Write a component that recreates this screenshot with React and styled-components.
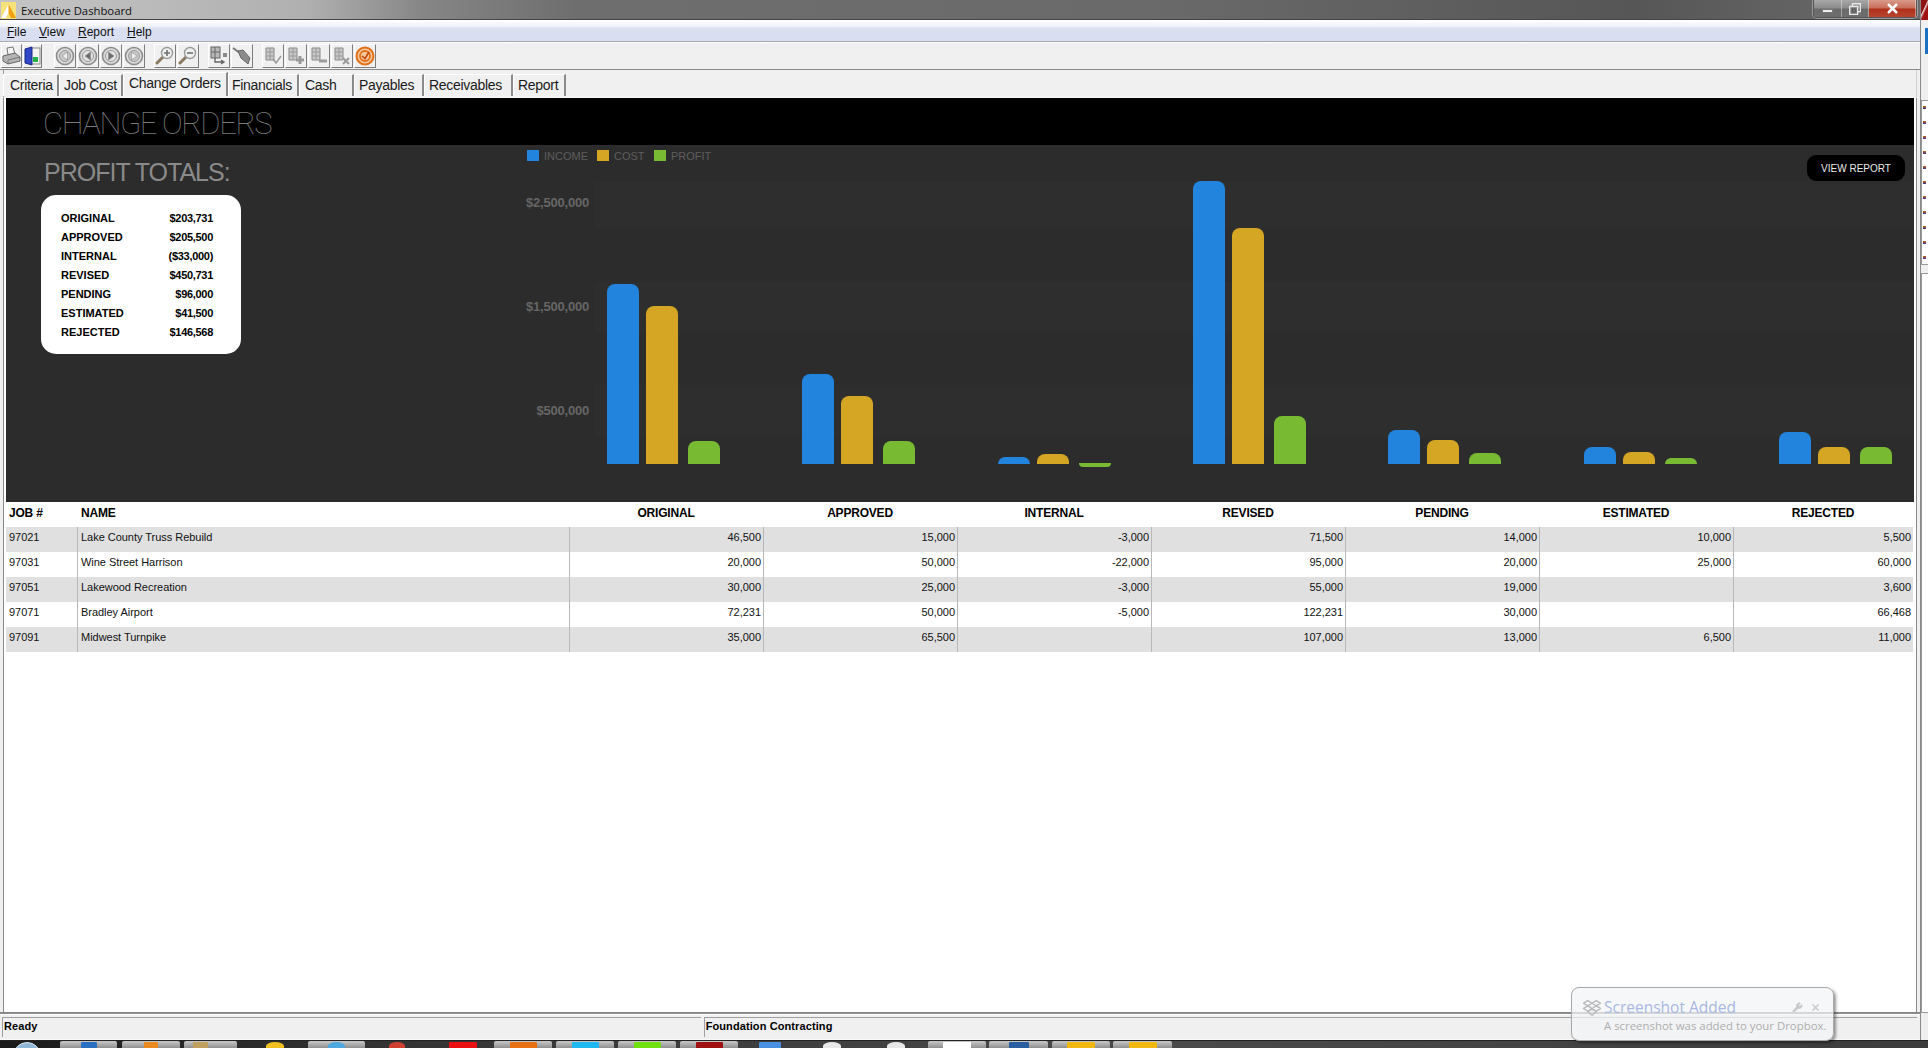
import React from "react";
import styled, { createGlobalStyle } from "styled-components";
import { Wrench, X } from "lucide-react";

const GlobalStyle = createGlobalStyle`
  html, body {
    margin: 0;
    padding: 0;
    width: 1928px;
    height: 1048px;
    overflow: hidden;
    background: #f0f0f0;
    font-family: "Liberation Sans", Arial, sans-serif;
  }
  * { box-sizing: border-box; }
`;

const Page = styled.div`
  position: relative;
  width: 1928px;
  height: 1048px;
  display: flex;
  flex-direction: column;
  overflow: hidden;
`;

const Desktop = styled.div`
  height: 1040px;
  display: flex;
`;

const Window = styled.div`
  width: 1920px;
  display: flex;
  flex-direction: column;
  background: #f0f0f0;
`;

// title bar
const TitleBar = styled.div`
  height: 22px;
  flex: none;
  display: flex;
  justify-content: space-between;
  border-bottom: 2px solid #fff;
  box-shadow: inset 0 -1px 0 #444;
  background: linear-gradient(90deg, #c4c4c4 0, #b0b0b0 16%, #868686 22%, #6e6e6e 30%, #6a6a6a 60%, #565656 85%, #6c6c6c 100%);
`;

const TitleLeft = styled.div`
  display: flex;
  align-items: center;
  padding-left: 1px;
  height: 20px;
`;

const TitleText = styled.span`
  margin-left: 5px;
  font-family: "Open Sans", sans-serif;
  font-size: 11.3px;
  color: #111;
`;

const WindowControls = styled.div`
  display: flex;
  height: 18px;
  margin-right: 3px;
  border: 1px solid #555;
  border-top: none;
  border-radius: 0 0 4px 4px;
  box-shadow: 0 0 0 1px rgba(255, 255, 255, 0.35);
`;

const ControlButton = styled.div`
  width: ${(p) => p.$w}px;
  display: flex;
  align-items: center;
  justify-content: center;
  border-right: 1px solid rgba(255, 255, 255, 0.4);
  background: ${(p) =>
    p.$close
      ? "linear-gradient(#d99a8a 0, #c9705c 45%, #b0301a 55%, #b8452e 100%)"
      : "linear-gradient(#a8a8a8 0, #8c8c8c 45%, #6a6a6a 55%, #6e6e6e 100%)"};
`;

const MinGlyph = styled.span`
  display: block;
  width: 11px;
  height: 4px;
  margin-top: 5px;
  background: #eee;
  border: 1px solid #777;
`;

// menu
const MenuBar = styled.div`
  height: 19px;
  flex: none;
  display: flex;
  align-items: center;
  padding-left: 7px;
  font-size: 12px;
  color: #111;
  background: linear-gradient(#f8f9fc 0, #f2f4fa 20%, #dbe0f1 35%, #d9dff0 100%);
`;

const MenuItem = styled.span`
  width: ${(p) => p.$w}px;
  &::first-letter {
    text-decoration: underline;
  }
`;

const Separator = styled.div`
  height: 2px;
  flex: none;
  background: #a6a8ae;
  border-bottom: 1px solid #fff;
`;

// toolbar
const Toolbar = styled.div`
  height: 27px;
  flex: none;
  display: flex;
  align-items: flex-start;
  padding: 1px 0 0 1px;
  border-bottom: 1px solid #8a8a8a;
`;

const ToolGroup = styled.div`
  display: flex;
  gap: ${(p) => p.$gap ?? 1}px;
  margin-right: ${(p) => p.$after}px;
`;

const ToolButton = styled.div`
  width: ${(p) => p.$w ?? 21}px;
  height: 24px;
  display: flex;
  align-items: center;
  justify-content: center;
  border-right: 1px solid #7d7d7d;
  border-bottom: 1px solid #7d7d7d;
  border-left: 1px solid #fff;
  border-top: 1px solid #fff;
`;

// tabs
const TabRow = styled.div`
  height: 28px;
  flex: none;
  display: flex;
  align-items: flex-end;
  margin: 0 3px;
  padding-bottom: 1px;
  border-left: 1px solid #9a9a9a;
  border-right: 1px solid #cfcfcf;
  border-bottom: 1px solid #fafafa;
`;

const Tab = styled.div`
  width: ${(p) => p.$w}px;
  height: ${(p) => (p.$active ? 24 : 22)}px;
  margin-left: ${(p) => p.$pull ?? 0}px;
  padding: ${(p) => (p.$active ? `0 0 4px ${p.$pad}px` : `0 0 2px ${p.$pad}px`)};
  display: flex;
  align-items: center;
  font-size: 14px;
  letter-spacing: -0.3px;
  color: #1a1a1a;
  border-right: 2px solid #8a8a8a;
  border-left: 1px solid #fff;
  border-top: 1px solid #fff;
  white-space: nowrap;
`;

const TabBody = styled.div`
  flex: 1;
  margin: 0 3px;
  padding: 0 2px;
  display: flex;
  flex-direction: column;
  background: #fff;
  border-left: 1px solid #8a8a8a;
  border-right: 1px solid #8a8a8a;
`;

const PageHeader = styled.div`
  height: 47px;
  flex: none;
  padding: 3px 0 0 37px;
  display: flex;
  align-items: center;
  background: #000;
`;

const PageTitle = styled.h1`
  margin: 0;
  font-family: Roboto, sans-serif;
  font-size: 31px;
  font-weight: 100;
  letter-spacing: -1.4px;
  color: #7a7a7a;
`;

// chart panel
const ChartPanel = styled.div`
  position: relative;
  height: 357px;
  flex: none;
  display: flex;
  background: #2c2c2c;
`;

const TotalsColumn = styled.div`
  width: 521px;
  flex: none;
  padding: 12px 0 0 35px;
`;

const TotalsTitle = styled.div`
  height: 30px;
  margin: 0 0 8px 3px;
  font-size: 25px;
  line-height: 30px;
  letter-spacing: -1px;
  color: #8a8a8a;
  white-space: nowrap;
`;

const TotalsCard = styled.div`
  width: 200px;
  height: 159px;
  padding: 13px 28px 0 20px;
  border-radius: 15px;
  background: #fff;
`;

const TotalsRow = styled.div`
  height: 19px;
  display: flex;
  justify-content: space-between;
  align-items: center;
  font-size: 11px;
  font-weight: bold;
  color: #000;
`;

const TotalValue = styled.span`
  letter-spacing: -0.3px;
`;

const PlotColumn = styled.div`
  flex: 1;
  padding-top: 5px;
`;

const Legend = styled.div`
  height: 11px;
  display: flex;
  align-items: center;
`;

const Swatch = styled.span`
  width: 12px;
  height: 11px;
  margin-right: 5px;
  background: ${(p) => p.$color};
`;

const LegendLabel = styled.span`
  width: ${(p) => p.$w}px;
  font-size: 11px;
  color: #5e5e5e;
`;

const Plot = styled.div`
  margin: 9px 0 0 -2px;
  display: flex;
`;

const Axis = styled.div`
  width: 64px;
  flex: none;
  padding-top: 25px;
  display: flex;
  flex-direction: column;
  gap: 88px;
  text-align: right;
`;

const AxisLabel = styled.div`
  height: 16px;
  font-size: 13px;
  line-height: 16px;
  font-weight: bold;
  color: #666;
  letter-spacing: -0.2px;
  white-space: nowrap;
`;

const Bars = styled.div`
  flex: 1;
  height: 294px;
  margin-left: 6px;
  padding-left: 12px;
  display: flex;
  align-items: flex-end;
  gap: 82.33px;
  background: linear-gradient(
    #2c2c2c 12px,
    #2e2e2e 12px,
    #2e2e2e 59px,
    #2c2c2c 59px,
    #2c2c2c 112px,
    #2e2e2e 112px,
    #2e2e2e 163px,
    #2c2c2c 163px,
    #2c2c2c 215px,
    #2e2e2e 215px,
    #2e2e2e 267px,
    #2c2c2c 267px
  );
`;

const BarGroup = styled.div`
  width: 113px;
  flex: none;
  display: flex;
  align-items: flex-end;
  gap: 7px;
`;

const Bar = styled.div`
  width: 32px;
  flex: none;
  height: ${(p) => Math.abs(p.$h)}px;
  margin-left: ${(p) => p.$left ?? 0}px;
  margin-bottom: ${(p) => (p.$h < 0 ? -3 : 0)}px;
  border-radius: ${(p) => (p.$h < 0 ? "0 0 8px 8px" : "8px 8px 0 0")};
  background: ${(p) => p.$color};
`;

const ViewReport = styled.div`
  position: absolute;
  top: 10px;
  right: 9px;
  width: 98px;
  height: 26px;
  display: flex;
  align-items: center;
  justify-content: center;
  border-radius: 9px;
  background: #000;
  font-size: 10px;
  color: #eaeaea;
`;

// table
const TableRow = styled.div`
  height: 25px;
  width: 1907px;
  flex: none;
  display: grid;
  grid-template-columns: 71px 492px repeat(6, 194px) 180px;
  background: ${(p) => (p.$shade ? "#e0e0e0" : "#fff")};
`;

const HeadCell = styled.div`
  display: flex;
  align-items: center;
  justify-content: ${(p) => (p.$left ? "flex-start" : "center")};
  padding: 0 0 3px ${(p) => (p.$left ? 3 : 0)}px;
  margin-left: ${(p) => (p.$indent ? 1 : 0)}px;
  font-size: 12px;
  font-weight: bold;
  letter-spacing: -0.2px;
  color: #000;
`;

const Cell = styled.div`
  display: flex;
  align-items: center;
  justify-content: ${(p) => (p.$num ? "flex-end" : "flex-start")};
  padding: 0 ${(p) => (p.$num ? 2 : 0)}px 5px ${(p) => (p.$num ? 0 : 3)}px;
  border-left: ${(p) => (p.$first ? "none" : "1px solid #b8b8b8")};
  font-size: 11px;
  letter-spacing: -0.03px;
  color: #111;
`;

// status bar
const StatusBar = styled.div`
  height: 28px;
  flex: none;
  display: flex;
  padding: 3px 0 2px 2px;
  border-top: 2px solid #8a8a8a;
  box-shadow: inset 0 1px 0 #fff;
  border-bottom: 1px solid #fafafa;
  font-size: 11px;
  font-weight: bold;
  letter-spacing: 0.1px;
  color: #000;
`;

const StatusPane = styled.div`
  width: ${(p) => p.$w}px;
  margin-right: 3px;
  padding: 0 0 3px 1px;
  display: flex;
  align-items: center;
  border-top: 1px solid #a0a0a0;
  border-left: 1px solid #a0a0a0;
`;

// edge of the window behind
const BehindEdge = styled.div`
  width: 8px;
  display: flex;
  flex-direction: column;
  align-items: flex-end;
  background: #efefef;
  border-left: 1px solid #8a8a8a;
`;

const RedCap = styled.div`
  width: 7px;
  height: 20px;
  background: linear-gradient(115deg, #8f1212 40%, #e8d8d8 45%, #a01010 60%);
`;

const BlueStrip = styled.div`
  width: 3px;
  height: 26px;
  margin-top: 8px;
  background: #1a6fc0;
`;

const DotList = styled.div`
  width: 7px;
  height: 165px;
  margin-top: 46px;
  border: 1px solid #999;
  border-right: none;
  background-color: #fff;
  background-image: repeating-linear-gradient(
    #fff 0,
    #fff 5px,
    #c86a10 5px,
    #3a2a90 8px,
    #fff 8px,
    #fff 15px
  );
  background-size: 3px 100%;
  background-position: 1px 0;
  background-repeat: no-repeat;
`;

const LowerBox = styled.div`
  width: 7px;
  height: 740px;
  margin-top: 8px;
  border: 1px solid #999;
  border-right: none;
  background: #fff;
`;

// taskbar
const Taskbar = styled.div`
  height: 8px;
  flex: none;
  display: flex;
  padding-left: 60px;
  position: relative;
  background: linear-gradient(90deg, #1a1a1a 0, #333 20%, #4a4a4a 60%, #3c3c3c 100%);
  border-top: 1px solid #222;
`;

const StartOrb = styled.div`
  position: absolute;
  left: 13px;
  top: 1px;
  width: 28px;
  height: 28px;
  border-radius: 50%;
  background: #8fb8d8;
  border: 1px solid #dfe8f0;
`;

const TaskButton = styled.div`
  width: ${(p) => p.$w}px;
  margin-right: ${(p) => p.$gap ?? 3}px;
  flex: none;
  display: flex;
  justify-content: center;
  padding-top: 1px;
  border-radius: 2px 2px 0 0;
  background: ${(p) => (p.$lit ? "linear-gradient(#c8c8c8, #8f8f8f)" : "transparent")};
`;

const TaskIcon = styled.span`
  display: block;
  width: ${(p) => p.$w}px;
  height: 8px;
  margin-left: ${(p) => p.$shift ?? 0}px;
  background: ${(p) => p.$color};
  border-radius: ${(p) => (p.$round ? "50% 50% 0 0" : "1px 1px 0 0")};
`;

// dropbox toast, floats over the window
const Toast = styled.div`
  position: absolute;
  left: 1571px;
  top: 987px;
  width: 263px;
  height: 54px;
  padding: 10px 0 0 11px;
  display: flex;
  gap: 3px;
  border: 1px solid #a8a8a8;
  border-radius: 8px;
  background: rgba(242, 244, 246, 0.72);
  box-shadow: 2px 2px 3px rgba(0, 0, 0, 0.4);
`;

const ToastMark = styled.div`
  flex: none;
  width: 18px;
  padding-top: 1px;
`;

const ToastBody = styled.div`
  flex: 1;
  min-width: 0;
  font-family: "Open Sans", sans-serif;
`;

const ToastHead = styled.div`
  display: flex;
  align-items: center;
  justify-content: space-between;
  padding-right: 12px;
`;

const ToastTitle = styled.div`
  font-size: 15.5px;
  line-height: 18px;
  color: #a9b8e0;
`;

const ToastActions = styled.div`
  display: flex;
  gap: 7px;
  color: #c8c8c8;
`;

const ToastText = styled.div`
  margin-top: 2px;
  font-size: 11.4px;
  line-height: 16px;
  color: #aeaeae;
  white-space: nowrap;
`;

const AppLogo = () => (
  <svg width="15" height="17" viewBox="0 0 15 17">
    <rect width="15" height="17" fill="#f6e27a" />
    <path d="M0 16 L7.5 2 L15 16 L10 16 L7.5 11 L5 16 Z" fill="#f0a010" />
    <path d="M0 16 L7.5 2 L7.5 11 L5 16 Z" fill="#fff" />
  </svg>
);

const RestoreGlyph = () => (
  <svg width="12" height="12" viewBox="0 0 12 12" fill="none" stroke="#e8e8e8" strokeWidth="1.4">
    <rect x="3.5" y="0.7" width="8" height="8" />
    <rect x="0.7" y="3.5" width="8" height="8" fill="#7c7c7c" />
    <rect x="3.2" y="6" width="3" height="3" stroke="#555" strokeWidth="1" />
  </svg>
);

const PrinterIcon = () => (
  <svg width="19" height="20" viewBox="0 0 19 20">
    <path d="M5 2 L11 1 L13 8 L6 9 Z" fill="#f4f4f4" stroke="#777" />
    <path d="M1 10 L13 7 L18 11 L18 15 L6 18 L1 15 Z" fill="#b4b4b4" stroke="#666" />
    <path d="M6 18 L6 14 L18 11" fill="none" stroke="#777" />
  </svg>
);

const DoorIcon = () => (
  <svg width="17" height="20" viewBox="0 0 17 20">
    <rect x="7" y="2" width="9" height="16" fill="#f4f4f4" stroke="#888" />
    <rect x="9" y="11" width="5" height="5" fill="#22b04a" />
    <path d="M1 3 L8 1 L8 19 L1 17 Z" fill="#3048c8" stroke="#1a2a80" />
  </svg>
);

// dir -1 points left, first/last ones are paler
const NavIcon = ({ dir, bar }) => (
  <svg width="20" height="20" viewBox="0 0 20 20">
    <circle cx="10" cy="10" r="8.5" fill="#dcdcdc" stroke="#8c8c8c" strokeWidth="1.6" />
    <circle cx="10" cy="10" r="5.5" fill={bar ? "#c8c8c8" : "#e4e4e4"} stroke="#999" />
    <path
      d={dir < 0 ? "M12.5 6 L7 10 L12.5 14 Z" : "M7.5 6 L13 10 L7.5 14 Z"}
      fill={bar ? "#efefef" : "#6e6e6e"}
      stroke="#888"
      strokeWidth="0.6"
    />
  </svg>
);

const ZoomIcon = ({ plus }) => (
  <svg width="20" height="20" viewBox="0 0 20 20">
    <path d="M8 11 L2 17" stroke="#8a7a60" strokeWidth="3" strokeLinecap="round" />
    <circle cx="12" cy="7" r="5.5" fill="#eef0f0" stroke="#9a9a9a" strokeWidth="1.4" />
    <path d={plus ? "M9 7 H15 M12 4 V10" : "M9 7 H15"} stroke="#707070" strokeWidth="1.6" />
  </svg>
);

const TreeIcon = () => (
  <svg width="20" height="20" viewBox="0 0 20 20">
    <rect x="2" y="1" width="9" height="11" fill="#b8b8b8" stroke="#666" />
    <path d="M2 6 H11 M6 1 V12" stroke="#666" />
    <rect x="14" y="7" width="4" height="4" fill="#888" />
    <path d="M6 12 V16 H14 M12 14 L15 16 L12 18" fill="none" stroke="#666" strokeWidth="1.4" />
  </svg>
);

const BroomIcon = () => (
  <svg width="20" height="20" viewBox="0 0 20 20">
    <path d="M1 2 L8 7" stroke="#777" strokeWidth="2" />
    <path d="M6 5 L11 4 L18 12 L16 18 L9 12 Z" fill="#8c8c8c" stroke="#666" />
  </svg>
);

const DbIcon = ({ mark }) => (
  <svg width="20" height="20" viewBox="0 0 20 20">
    <path d="M3 2 H11 V14 H3 Z" fill="#c8c8c8" stroke="#8a8a8a" />
    <path d="M3 6 H11 M3 10 H11 M7 2 V14" stroke="#9a9a9a" />
    {mark === "check" && <path d="M10 13 L13 17 L18 10" fill="none" stroke="#9a9a9a" strokeWidth="1.6" />}
    {mark === "plus" && <path d="M14 10 V18 M10 14 H18" stroke="#9a9a9a" strokeWidth="3" />}
    {mark === "minus" && <path d="M10 15 H18" stroke="#9a9a9a" strokeWidth="3" />}
    {mark === "x" && <path d="M11 12 L17 18 M17 12 L11 18" stroke="#9a9a9a" strokeWidth="2" />}
  </svg>
);

const TargetIcon = () => (
  <svg width="20" height="20" viewBox="0 0 20 20" fill="none">
    <circle cx="10" cy="10" r="8.5" fill="#f6c79a" stroke="#e0701a" strokeWidth="2" />
    <circle cx="10" cy="10" r="5" stroke="#e0701a" strokeWidth="1.8" />
    <path d="M7 10 L10 12.5 L14 6" stroke="#c04a08" strokeWidth="1.6" />
  </svg>
);

const DropboxMark = () => (
  <svg width="18" height="18" viewBox="0 0 17 17" fill="none" stroke="#b8b8b8" strokeWidth="1.2">
    <path d="M4.5 1.5 L8.5 4 L4.5 6.5 L0.5 4 Z" />
    <path d="M12.5 1.5 L16.5 4 L12.5 6.5 L8.5 4 Z" />
    <path d="M4.5 6.5 L8.5 9 L4.5 11.5 L0.5 9 Z" />
    <path d="M12.5 6.5 L16.5 9 L12.5 11.5 L8.5 9 Z" />
    <path d="M4.5 12 L8.5 9.7 L12.5 12 L8.5 15.5 Z" />
  </svg>
);

const menus = [
  { label: "File", w: 32 },
  { label: "View", w: 39 },
  { label: "Report", w: 49 },
  { label: "Help", w: 30 },
];

const tabs = [
  { label: "Criteria", w: 56, pad: 6, pull: -1 },
  { label: "Job Cost", w: 64, pad: 4 },
  { label: "Change Orders", w: 105, pad: 5, active: true },
  { label: "Financials", w: 71, pad: 3 },
  { label: "Cash", w: 55, pad: 5 },
  { label: "Payables", w: 70, pad: 4 },
  { label: "Receivables", w: 89, pad: 4 },
  { label: "Report", w: 53, pad: 4 },
];

const totals = [
  ["ORIGINAL", "$203,731"],
  ["APPROVED", "$205,500"],
  ["INTERNAL", "($33,000)"],
  ["REVISED", "$450,731"],
  ["PENDING", "$96,000"],
  ["ESTIMATED", "$41,500"],
  ["REJECTED", "$146,568"],
];

const BLUE = "#2284dc";
const GOLD = "#d4a624";
const GREEN = "#78bb33";

// income, cost, profit heights in px, taken from the totals
const barSets = [
  [180, 158, 23],
  [90, 68, 23],
  [7, 10, -4],
  [283, 236, 48],
  [34, 24, 11],
  [17, 12, 6],
  [32, 17, 17],
];

const columns = ["ORIGINAL", "APPROVED", "INTERNAL", "REVISED", "PENDING", "ESTIMATED", "REJECTED"];

const jobs = [
  ["97021", "Lake County Truss Rebuild", "46,500", "15,000", "-3,000", "71,500", "14,000", "10,000", "5,500"],
  ["97031", "Wine Street Harrison", "20,000", "50,000", "-22,000", "95,000", "20,000", "25,000", "60,000"],
  ["97051", "Lakewood Recreation", "30,000", "25,000", "-3,000", "55,000", "19,000", "", "3,600"],
  ["97071", "Bradley Airport", "72,231", "50,000", "-5,000", "122,231", "30,000", "", "66,468"],
  ["97091", "Midwest Turnpike", "35,000", "65,500", "", "107,000", "13,000", "6,500", "11,000"],
];

const taskItems = [
  { w: 57, gap: 5, lit: true, color: "#2a6fc0", icon: 16 },
  { w: 58, gap: 4, lit: true, color: "#e88a20", icon: 14 },
  { w: 53, gap: 5, lit: true, color: "#c0a060", icon: 15, shift: -20 },
  { w: 65, gap: 1, color: "#f0c020", icon: 18, round: true },
  { w: 57, gap: 2, lit: true, color: "#50a8e0", icon: 17, round: true },
  { w: 60, gap: 6, color: "#d04030", icon: 16, round: true },
  { w: 59, gap: 2, color: "#e81010", icon: 28 },
  { w: 58, gap: 4, lit: true, color: "#e87010", icon: 27 },
  { w: 58, gap: 4, lit: true, color: "#20b8f0", icon: 27 },
  { w: 58, gap: 4, lit: true, color: "#70e010", icon: 27 },
  { w: 58, gap: 2, lit: true, color: "#a01010", icon: 27 },
  { w: 60, gap: 2, color: "#4a90e0", icon: 22 },
  { w: 60, gap: 2, color: "#e8e8e8", icon: 18, round: true },
  { w: 64, gap: 0, color: "#e8e8e8", icon: 18, round: true },
  { w: 58, gap: 3, lit: true, color: "#ffffff", icon: 28 },
  { w: 59, gap: 4, lit: true, color: "#2a5fa0", icon: 20 },
  { w: 58, gap: 3, lit: true, color: "#f0b810", icon: 28 },
  { w: 59, gap: 0, lit: true, color: "#f0b810", icon: 28 },
];

const App = () => {
  return (
    <Page>
      <GlobalStyle />
      <Desktop>
        <Window>
          <TitleBar>
            <TitleLeft>
              <AppLogo />
              <TitleText>Executive Dashboard</TitleText>
            </TitleLeft>
            <WindowControls>
              <ControlButton $w={28}>
                <MinGlyph />
              </ControlButton>
              <ControlButton $w={27}>
                <RestoreGlyph />
              </ControlButton>
              <ControlButton $w={47} $close>
                <X size={15} color="#fff" strokeWidth={4} />
              </ControlButton>
            </WindowControls>
          </TitleBar>

          <MenuBar>
            {menus.map((m) => (
              <MenuItem key={m.label} $w={m.w}>
                {m.label}
              </MenuItem>
            ))}
          </MenuBar>
          <Separator />

          <Toolbar>
            <ToolGroup $after={12}>
              <ToolButton><PrinterIcon /></ToolButton>
              <ToolButton $w={19}><DoorIcon /></ToolButton>
            </ToolGroup>
            <ToolGroup $after={9}>
              <ToolButton $w={22}><NavIcon dir={-1} bar /></ToolButton>
              <ToolButton $w={22}><NavIcon dir={-1} /></ToolButton>
              <ToolButton $w={22}><NavIcon dir={1} /></ToolButton>
              <ToolButton $w={22}><NavIcon dir={1} bar /></ToolButton>
            </ToolGroup>
            <ToolGroup $after={9}>
              <ToolButton $w={22}><ZoomIcon plus /></ToolButton>
              <ToolButton $w={22}><ZoomIcon /></ToolButton>
            </ToolGroup>
            <ToolGroup $after={9}>
              <ToolButton $w={22}><TreeIcon /></ToolButton>
              <ToolButton $w={22}><BroomIcon /></ToolButton>
            </ToolGroup>
            <ToolGroup>
              <ToolButton $w={22}><DbIcon mark="check" /></ToolButton>
              <ToolButton $w={22}><DbIcon mark="plus" /></ToolButton>
              <ToolButton $w={22}><DbIcon mark="minus" /></ToolButton>
              <ToolButton $w={22}><DbIcon mark="x" /></ToolButton>
              <ToolButton $w={22}><TargetIcon /></ToolButton>
            </ToolGroup>
          </Toolbar>

          <TabRow>
            {tabs.map((t) => (
              <Tab key={t.label} $w={t.w} $pad={t.pad} $pull={t.pull} $active={t.active}>
                {t.label}
              </Tab>
            ))}
          </TabRow>

          <TabBody>
            <PageHeader>
              <PageTitle>CHANGE ORDERS</PageTitle>
            </PageHeader>

            <ChartPanel>
              <TotalsColumn>
                <TotalsTitle>PROFIT TOTALS:</TotalsTitle>
                <TotalsCard>
                  {totals.map(([label, value]) => (
                    <TotalsRow key={label}>
                      <span>{label}</span>
                      <TotalValue>{value}</TotalValue>
                    </TotalsRow>
                  ))}
                </TotalsCard>
              </TotalsColumn>

              <PlotColumn>
                <Legend>
                  <Swatch $color={BLUE} />
                  <LegendLabel $w={53}>INCOME</LegendLabel>
                  <Swatch $color={GOLD} />
                  <LegendLabel $w={40}>COST</LegendLabel>
                  <Swatch $color={GREEN} />
                  <LegendLabel $w={44}>PROFIT</LegendLabel>
                </Legend>
                <Plot>
                  <Axis>
                    <AxisLabel>$2,500,000</AxisLabel>
                    <AxisLabel>$1,500,000</AxisLabel>
                    <AxisLabel>$500,000</AxisLabel>
                  </Axis>
                  <Bars>
                    {barSets.map(([income, cost, profit], i) => (
                      <BarGroup key={i}>
                        <Bar $h={income} $color={BLUE} />
                        <Bar $h={cost} $color={GOLD} />
                        <Bar $h={profit} $color={GREEN} $left={3} />
                      </BarGroup>
                    ))}
                  </Bars>
                </Plot>
              </PlotColumn>

              <ViewReport>VIEW REPORT</ViewReport>
            </ChartPanel>

            <TableRow>
              <HeadCell $left>JOB #</HeadCell>
              <HeadCell $left $indent>NAME</HeadCell>
              {columns.map((c) => (
                <HeadCell key={c}>{c}</HeadCell>
              ))}
            </TableRow>
            {jobs.map(([job, name, ...nums], i) => (
              <TableRow key={job} $shade={i % 2 === 0}>
                <Cell $first>{job}</Cell>
                <Cell>{name}</Cell>
                {nums.map((n, j) => (
                  <Cell key={j} $num>
                    {n}
                  </Cell>
                ))}
              </TableRow>
            ))}
          </TabBody>

          <StatusBar>
            <StatusPane $w={699}>Ready</StatusPane>
            <StatusPane $w={1214}>Foundation Contracting</StatusPane>
          </StatusBar>
        </Window>

        <BehindEdge>
          <RedCap />
          <BlueStrip />
          <DotList />
          <LowerBox />
        </BehindEdge>
      </Desktop>

      <Taskbar>
        <StartOrb />
        {taskItems.map((t, i) => (
          <TaskButton key={i} $w={t.w} $gap={t.gap} $lit={t.lit}>
            <TaskIcon $w={t.icon} $color={t.color} $round={t.round} $shift={t.shift} />
          </TaskButton>
        ))}
      </Taskbar>

      <Toast>
        <ToastMark>
          <DropboxMark />
        </ToastMark>
        <ToastBody>
          <ToastHead>
            <ToastTitle>Screenshot Added</ToastTitle>
            <ToastActions>
              <Wrench size={11} fill="#c8c8c8" />
              <X size={11} strokeWidth={3} />
            </ToastActions>
          </ToastHead>
          <ToastText>A screenshot was added to your Dropbox.</ToastText>
        </ToastBody>
      </Toast>
    </Page>
  );
};

export default App;
